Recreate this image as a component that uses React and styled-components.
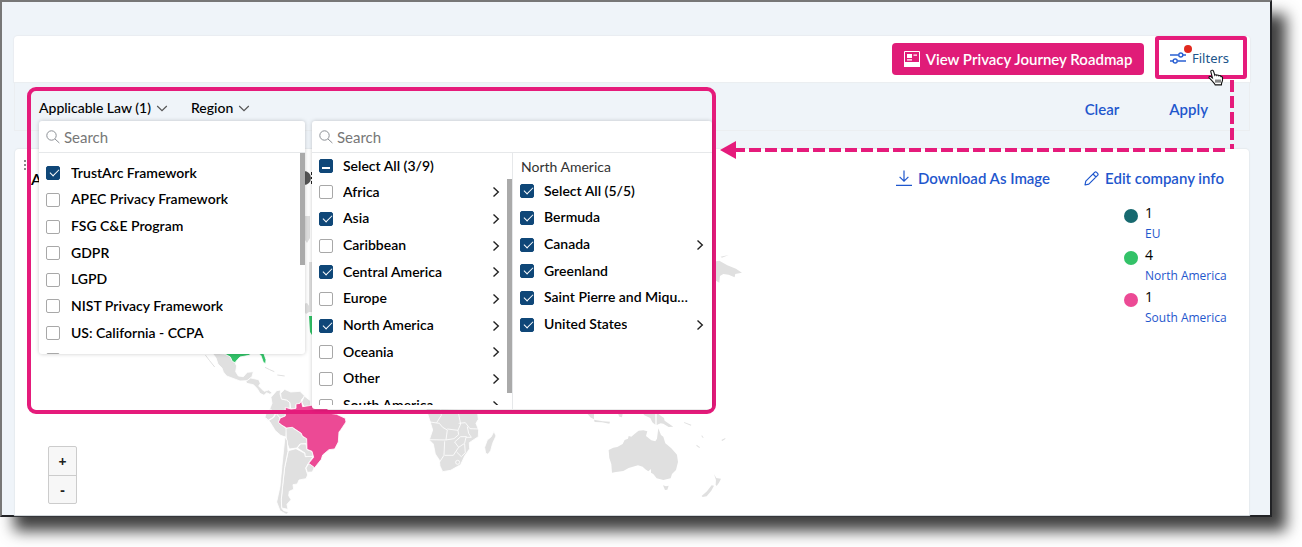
import { useState } from 'react';
import styled, { createGlobalStyle } from 'styled-components';

const GlobalStyle = createGlobalStyle`
  * {
    box-sizing: border-box;
  }

  body {
    margin: 0;
    background: #ffffff;
    font-family: Lato, "Liberation Sans", sans-serif;
    font-size: 14px;
    color: #000000;
  }

  button,
  input {
    font-family: inherit;
  }
`;

const Page = styled.div`
  min-height: 100vh;
  padding: 0 30px 30px 0;
  display: flex;
  overflow: hidden;
`;

const Window = styled.main`
  flex: 1;
  min-width: 0;
  display: flex;
  flex-direction: column;
  padding: 34px 20px 0 12px;
  background: #eff4f9;
  border: 2px solid;
  border-color: #777777 #222326 #222326 #777777;
  box-shadow: 14px 14px 14px rgba(0, 0, 0, 0.75);
`;

const Toolbar = styled.header`
  display: flex;
  justify-content: flex-end;
  align-items: flex-start;
  gap: 11px;
  height: 46px;
  padding-right: 3px;
  background: #ffffff;
  border-radius: 4px 4px 0 0;
  box-shadow: 0 0 1px 1px #e9edf1;
`;

const RoadmapButton = styled.button`
  display: flex;
  align-items: center;
  justify-content: center;
  gap: 6px;
  width: 252px;
  height: 32px;
  margin-top: 7px;
  padding: 0;
  border: 0;
  border-radius: 4px;
  background: #e01c78;
  color: #ffffff;
  font-size: 15px;
  font-weight: 600;
`;

const FilterToggleBox = styled.div`
  position: relative;
  display: flex;
  width: 92px;
  height: 43px;
  border: 4px solid #e51b7b;
  border-radius: 3px;
`;

const FilterToggle = styled.button`
  display: flex;
  align-items: center;
  flex: 1;
  gap: 6px;
  padding: 0 0 0 11px;
  border: 0;
  background: #ffffff;
  color: #20558a;
  font-family: "Noto Sans", sans-serif;
  font-size: 13px;
`;

const AlertDot = styled.span`
  position: absolute;
  top: 5px;
  left: 25px;
  width: 8px;
  height: 8px;
  border-radius: 50%;
  background: #e1291f;
`;

const Cursor = styled.svg`
  position: absolute;
  top: 29px;
  left: 49px;
  z-index: 4;
`;

const FilterBar = styled.section`
  position: relative;
  z-index: 2;
  display: flex;
  align-items: center;
  justify-content: flex-end;
  gap: 50px;
  height: 49px;
  padding: 5px 41px 0 0;
  border: 1px solid #ebeef1;
`;

const LinkButton = styled.button`
  display: flex;
  align-items: center;
  gap: 6px;
  padding: 0;
  border: 0;
  background: none;
  color: #1f57cd;
  font-size: 15px;
  font-weight: 600;
  line-height: 18px;
  white-space: nowrap;
`;

const Highlight = styled.div`
  position: absolute;
  top: 4px;
  left: 12px;
  width: 689px;
  height: 327px;
  border: 4px solid #e51b7b;
  border-radius: 9px;
`;

const FilterTabs = styled.div`
  display: flex;
  gap: 23px;
  height: 30px;
  padding: 3px 0 0 8px;
`;

const FilterTab = styled.button`
  display: flex;
  align-items: center;
  gap: 5px;
  padding: 0;
  border: 0;
  background: none;
  color: #000000;
  font-size: 14px;
  font-weight: 500;
`;

const Panels = styled.div`
  display: flex;
  align-items: flex-start;
  gap: 7px;
  padding-left: 8px;
`;

const Panel = styled.div`
  flex: ${props => props.$grow ? 1 : '0 0 266px'};
  min-width: 0;
  height: ${props => props.$height};
  overflow: hidden;
  background: #ffffff;
  border-radius: 3px;
  box-shadow: 0 0 4px rgba(0, 0, 0, 0.2);
`;

const SearchBox = styled.label`
  display: flex;
  align-items: center;
  gap: 4px;
  height: 32px;
  padding: 0 7px;
  border-bottom: 1px solid #e6e8ea;
  color: #8b8f94;
`;

const SearchInput = styled.input`
  flex: 1;
  min-width: 0;
  padding: 0;
  border: 0;
  outline: 0;
  background: transparent;
  font-size: 15px;

  &::placeholder {
    color: #777777;
  }
`;

const LawBody = styled.div`
  position: relative;
  height: 201px;
  padding-top: 7px;
  overflow: hidden;
`;

const OptionList = styled.ul`
  display: grid;
  grid-auto-rows: 1fr;
  height: ${props => props.$height};
  margin: 0;
  padding: 0;
  list-style: none;
`;

const OptionRow = styled.li`
  display: flex;
  align-items: center;
  min-width: 0;
  padding: 0 ${props => props.$end || '12px'} 0 7px;
`;

const OptionLabel = styled.label`
  display: flex;
  align-items: center;
  flex: 1;
  min-width: 0;
  gap: ${props => props.$gap || '10px'};
  font-size: 14px;
  font-weight: 600;
`;

const OptionText = styled.span`
  padding-bottom: 2px;
  overflow: hidden;
  text-overflow: ellipsis;
  white-space: nowrap;
`;

const Checkbox = styled.input`
  appearance: none;
  position: relative;
  flex: none;
  width: 14px;
  height: 14px;
  margin: 0;
  border: 1px solid #a8a8a8;
  border-radius: 2px;
  background: #ffffff;

  &:checked {
    border-color: #0f4778;
    background: #0f4778;
  }

  &:checked::after {
    content: '';
    position: absolute;
    top: ${props => props.$mixed ? '5px' : '2px'};
    left: ${props => props.$mixed ? '2px' : '3px'};
    width: 8px;
    height: ${props => props.$mixed ? '2px' : '4px'};
    border: 0 solid #ffffff;
    border-width: ${props => props.$mixed ? '0 0 2px 0' : '0 0 1px 1px'};
    transform: ${props => props.$mixed ? 'none' : 'rotate(-45deg)'};
  }
`;

const ScrollThumb = styled.span`
  position: absolute;
  top: 0;
  right: 0;
  width: 5px;
  height: ${props => props.$height};
  background: #aaaaaa;
`;

const RegionColumns = styled.div`
  display: grid;
  grid-template-columns: 201px 1fr;
  height: 256px;
`;

const RegionColumn = styled.div`
  min-width: 0;
  border-right: ${props => props.$divided ? '1px solid #e6e8ea' : '0'};
`;

const ColumnHead = styled.div`
  display: flex;
  height: 26px;
`;

const ColumnTitle = styled.h3`
  margin: 0;
  padding: 2px 0 0 8px;
  color: #333333;
  font-size: 14px;
  font-weight: 400;
  line-height: 23px;
`;

const RegionScroll = styled.div`
  position: relative;
  height: 226px;
  overflow: hidden;
`;

const Connector = styled.svg`
  position: absolute;
  top: -4px;
  right: 14px;
  z-index: 3;
`;

const Card = styled.section`
  position: relative;
  flex: 1;
  margin: 18px 1px 0;
  overflow: hidden;
  background: #ffffff;
  border-radius: 4px 4px 0 0;
  box-shadow: 0 0 1px 1px #e6ebef;
`;

const CardHeader = styled.div`
  display: flex;
  align-items: center;
  height: 54px;
  padding: 4px 25px 0 8px;
`;

const Grip = styled.svg`
  align-self: flex-start;
  margin-top: 7px;
`;

const CardTitle = styled.h2`
  flex: 0 0 267px;
  margin: 0;
  padding-left: 4px;
  font-size: 16px;
  font-weight: 600;
`;

const CardActions = styled.div`
  display: flex;
  gap: 34px;
  margin-left: auto;
`;

const CardBody = styled.div`
  display: flex;
  justify-content: space-between;
  padding-right: 23px;
`;

const Legend = styled.ul`
  width: 102px;
  margin: 0;
  padding: 0;
  list-style: none;
`;

const LegendItem = styled.li`
  display: grid;
  grid-template-columns: 14px 1fr;
  column-gap: 7px;
  height: 42px;
  font-family: "Open Sans", sans-serif;
`;

const LegendDot = styled.span`
  width: 14px;
  height: 14px;
  margin-top: 6px;
  border-radius: 50%;
  background: ${props => props.$color};
`;

const LegendCount = styled.div`
  font-size: 14px;
  line-height: 20px;
`;

const LegendLink = styled.a`
  display: block;
  color: #1f57cd;
  font-size: 12px;
  line-height: 22px;
  text-decoration: none;
  white-space: nowrap;
`;

const ZoomControls = styled.div`
  position: absolute;
  bottom: 11px;
  left: 33px;
  display: flex;
  flex-direction: column;
  width: 29px;
  border: 1px solid #cccccc;
  border-radius: 2px;
  background: #f7f7f7;
`;

const ZoomButton = styled.button`
  height: 28px;
  padding: 0;
  border: 0;
  background: none;
  color: #222222;
  font-family: "Open Sans", sans-serif;
  font-size: 14px;
  font-weight: 700;

  & + & {
    border-top: 1px solid #cccccc;
  }
`;

const LAWS = [
  'TrustArc Framework',
  'APEC Privacy Framework',
  'FSG C&E Program',
  'GDPR',
  'LGPD',
  'NIST Privacy Framework',
  'US: California - CCPA',
  'Framework Enterprise',
];

const REGIONS = [
  'Africa',
  'Asia',
  'Caribbean',
  'Central America',
  'Europe',
  'North America',
  'Oceania',
  'Other',
  'South America',
];

const COUNTRIES = [
  { name: 'Select All (5/5)' },
  { name: 'Bermuda' },
  { name: 'Canada', nested: true },
  { name: 'Greenland' },
  { name: 'Saint Pierre and Miquelon' },
  { name: 'United States', nested: true },
];

const LEGEND = [
  { count: 1, name: 'EU', color: '#17696f' },
  { count: 4, name: 'North America', color: '#33c268' },
  { count: 1, name: 'South America', color: '#ec4a95' },
];

const SearchIcon = () => (
  <svg width="14" height="14" viewBox="0 0 14 14" fill="none" stroke="currentColor">
    <circle cx="5.5" cy="5.5" r="4.7" />
    <path d="M9 9l4.4 4" />
  </svg>
);

const ChevronDown = () => (
  <svg width="12" height="12" viewBox="0 0 12 12" fill="none" stroke="#555555" strokeWidth="1.2">
    <path d="M1.2 4l4.8 4.6L10.8 4" />
  </svg>
);

const ChevronRight = () => (
  <svg width="8" height="12" viewBox="0 0 8 12" fill="none" stroke="#222222" strokeWidth="1.4">
    <path d="M1.5 1.4L6.3 6l-4.8 4.6" />
  </svg>
);

const RoadmapIcon = () => (
  <svg width="16" height="16" viewBox="0 0 16 16">
    <path d="M.5.5h15v15H.5z" fill="none" stroke="#ffffff" />
    <path d="M0 11h16v5H0zM3 3h5v4H3zM9.5 3.5H13v1.300H9.5zM3 8.200h5v1.300H3z" fill="#ffffff" />
  </svg>
);

const SlidersIcon = () => (
  <svg width="16" height="14" viewBox="0 0 16 14" fill="none" stroke="#2a60d2" strokeWidth="1.4">
    <path d="M0 4h8.5M13 4h3M0 10h3M7.5 10H16" />
    <circle cx="10.8" cy="4" r="2" />
    <circle cx="5.2" cy="10" r="2" />
  </svg>
);

const DownloadIcon = () => (
  <svg width="16" height="16" viewBox="0 0 16 16" fill="none" stroke="currentColor" strokeWidth="1.2">
    <path d="M8 .5v10.5M3.6 6.8L8 11.2l4.4-4.4M0 15.3h16" />
  </svg>
);

const PencilIcon = () => (
  <svg width="15" height="15" viewBox="0 0 15 15" fill="none" stroke="currentColor" strokeWidth="1.2" strokeLinejoin="round">
    <path d="M1 14l.8-3.8L10.6 1.4q1-.9 2 0l1 1q.9 1 0 2L4.8 13.2zM9 3l3 3" />
  </svg>
);

const HandCursor = () => (
  <Cursor width="16" height="17" viewBox="0 0 16 17">
    <path
      d="M3.5 1.4c.8-.5 1.7 0 2 .8l1.3 4c.5-.7 1.7-.6 2 .2.6-.7 1.8-.5 2.1.4.7-.5 1.9-.2 2.1.8.7-.2 1.4.2 1.5 1v2.6c0 1-.5 1.8-.9 2.8l-.2 1.9H7.2c-.5-1.7-2.2-3-3.8-4.7L1.2 8.9c-.7-.9.5-1.9 1.5-1.3l1.7 1.3L2.8 2.7c-.1-.5.2-1.1.7-1.3z"
      fill="#ffffff"
      stroke="#111111"
      strokeWidth="1.1"
    />
    <path d="M8 10.5v3.2M10 10.5v3.2M12 10.5v3.2" stroke="#111111" />
  </Cursor>
);

const WorldMap = () => (
  <svg width="760" height="311" viewBox="15 203 760 311" fill="#e0e0e0" stroke="#ffffff" strokeWidth="2.5" strokeLinejoin="round">
    {/* Strips of North America that stay visible between the menus */}
    <g stroke="none">
      <path d="M303 216h7v22l-3 5-4-6zM309 262h4v50h-4zM300 305l7-2 5 7-6 4z" />
      <path d="M309 316h5v22l-4-6z" fill="#33c268" />
    </g>

    {/* Americas and Africa */}
    <g transform="translate(190 340) scale(.3333)">
      <path d="M66 38L104 42 122 50 134 66 140 78 137 95 145 108 160 110 172 97 190 95 186 110 172 122 150 123 110 108 100 96 96 84 84 72 78 54z" />
      <path d="M168 124L182 114 206 119 211 130 206 138 222 154 236 150 246 158 240 163 230 158 222 166 210 160 202 146 190 134 170 130z" />
      <path d="M225 82l14 7 14 6M262 105l22 3M46 45l12 16 16 20" fill="none" stroke="#e0e0e0" strokeWidth="3" />
      <path d="M98 38h86l-6 8-28 5-8 8-7 9-8-4-6-13zM204 38l17 1 7 20-1 12-7-4-7-20z" fill="#33c268" />
      <path d="M246 190L243 172 260 152 272 150 270 162 276 178 290 180 300 188 300 205 286 204 286 228 270 234 258 220 238 210z" />
      <path d="M272 160L284 148 302 156 330 154 344 168 334 180 336 187 318 194 318 205 302 207 300 188 290 180 274 177z" />
      <path d="M343 168l18 14v18l-18 2-8-16z" />
      <path d="M229 216L240 207 257 218 250 232 232 242 225 232z" />
      <path d="M227 234L236 242 252 232 258 220 270 234 266 248 284 262 290 266 288 292 272 286 256 272 240 246z" />
      <path d="M288 265L305 258 312 266 334 280 338 290 350 295 352 311 330 312 321 324 298 327 289 304z" />
      <path d="M322 324L332 312 348 312 351 329 366 334 370 348 360 353 344 349 345 339z" />
      <path d="M295 332L318 326 344 340 346 350 370 349 355 370 347 384 353 405 348 416 327 420 322 432 309 434 311 448 298 454 296 467 303 479 291 493 294 508 275 504 274 478 278 436 284 382z" />
      <path d="M285 290L292 302 294 334 284 382 278 436 274 478 275 504 281 512 296 516 289 523 270 512 260 486 270 440 276 376z" />
      <path d="M348 384L357 370 373 382 367 396 352 397z" />
      <path d="M286 202L303 207 318 205 318 192 330 190 334 182 338 200 364 196 372 202 412 205 420 220 440 223 466 235 468 246 452 270 447 276 445 306 434 327 417 329 398 345 394 358 374 383 356 370 371 352 366 334 351 328 350 296 337 288 334 280 307 262 290 264 276 256 265 247 271 234 286 228z" fill="#ec4a95" />
      <path d="M560 198h60l24 10-12 4-18-5-18 1z" />
      <path d="M708 206L862 210 865 238 858 250 866 270 865 290 838 308 839 326 824 348 812 374 782 391 758 395 750 378 748 360 736 342 730 312 718 300 728 270 719 240z" />
      <path d="M720 246L748 250 758 262 772 270 768 300 718 299M752 205L754 226 740 248M772 267L804 271 812 252 806 222 815 205M804 271L806 284 792 296 768 300M806 250L826 248 840 266 866 267M832 260L836 280 844 292 828 292 824 310 806 322 794 306 812 290 830 290M764 304L762 346 749 366 734 350M764 346L790 346 806 322M824 312L826 338 814 350 800 336" fill="none" />
      <circle cx="803" cy="367" r="6" />
      <path d="M912 274L918 288 908 310 902 332 894 343 887 340 884 322 892 300 904 290z" />
    </g>

    {/* Australia and Oceania */}
    <g transform="translate(480 390) scale(.3333)" stroke="none">
      <path d="M386 180L400 173 412 171 428 162 434 150 444 146 446 138 454 140 470 127 476 122 490 121 502 124 498 138 514 151 526 154 531 146 535 115 543 135 550 140 556 160 574 175 591 194 594 216 588 240 576 252 572 265 550 270 530 265 520 252 513 248 513 237 505 244 496 238 488 230 474 226 446 234 430 243 408 246 396 248 394 222 388 204z" />
      <path d="M549 286l9 3 8-2-4 12-7 1zM702 252l7 12 14 2-6 12-7 10-3-4 1-14zM665 318l16-14 14-18 7 1-8 15-14 17-12 2z" />
      <path d="M486 66h40v38l-9-7-6-13-18-8zM530 66l10 10 12 8 2 8 26 18-14 1-16-10-8-1-12 5zM318 66h24v22l-11-6zM342 89l26 5 22 1-2 6-22-4-22-1zM412 66l16 6-2 10-8-2z" />
      <path d="M612 96l22 8-1 3-20-8zM666 136l5 7-2 1-5-6zM650 164l10 8-2 2-9-7zM724 150l12-6v3l-9 6z" />
    </g>

    {/* Far east coast */}
    <g transform="translate(300 240) scale(.3333)" stroke="none">
      <path d="M1236 66l22-4 24 14 26 10 18 12-20 4-2 10-18-8-16-2-10 6-2 20-10-6-12-10zM1262 50l24-5-20 8z" />
    </g>
  </svg>
);

const App = () => {
  const [laws, setLaws] = useState(['TrustArc Framework']);
  const [regions, setRegions] = useState(['Asia', 'Central America', 'North America']);
  const [countries, setCountries] = useState(COUNTRIES.map(country => country.name));

  const toggle = (setter, name) => {
    setter(prev => prev.includes(name) ? prev.filter(item => item !== name) : [...prev, name]);
  };

  return (
    <Page>
      <GlobalStyle />
      <Window>
        <Toolbar>
          <RoadmapButton type="button">
            <RoadmapIcon />
            View Privacy Journey Roadmap
          </RoadmapButton>
          <FilterToggleBox>
            <FilterToggle type="button">
              <SlidersIcon />
              Filters
            </FilterToggle>
            <AlertDot />
            <HandCursor />
          </FilterToggleBox>
        </Toolbar>

        <FilterBar>
          <LinkButton type="button">Clear</LinkButton>
          <LinkButton type="button">Apply</LinkButton>

          <Highlight>
            <FilterTabs>
              <FilterTab type="button">
                Applicable Law (1)
                <ChevronDown />
              </FilterTab>
              <FilterTab type="button">
                Region
                <ChevronDown />
              </FilterTab>
            </FilterTabs>

            <Panels>
              <Panel $height="233px">
                <SearchBox>
                  <SearchIcon />
                  <SearchInput type="text" placeholder="Search" aria-label="Search laws" />
                </SearchBox>
                <LawBody>
                  <OptionList $height="213px">
                    {LAWS.map(law => (
                      <OptionRow key={law}>
                        <OptionLabel $gap="11px">
                          <Checkbox
                            type="checkbox"
                            checked={laws.includes(law)}
                            onChange={() => toggle(setLaws, law)}
                          />
                          <OptionText>{law}</OptionText>
                        </OptionLabel>
                      </OptionRow>
                    ))}
                  </OptionList>
                  <ScrollThumb $height="112px" />
                </LawBody>
              </Panel>

              <Panel $grow $height="288px">
                <SearchBox>
                  <SearchIcon />
                  <SearchInput type="text" placeholder="Search" aria-label="Search regions" />
                </SearchBox>
                <RegionColumns>
                  <RegionColumn $divided>
                    <ColumnHead>
                      <OptionRow as="div">
                        <OptionLabel>
                          <Checkbox type="checkbox" $mixed checked readOnly />
                          <OptionText>Select All (3/9)</OptionText>
                        </OptionLabel>
                      </OptionRow>
                    </ColumnHead>
                    <RegionScroll>
                      <OptionList $height="240px">
                        {REGIONS.map(region => (
                          <OptionRow key={region}>
                            <OptionLabel>
                              <Checkbox
                                type="checkbox"
                                checked={regions.includes(region)}
                                onChange={() => toggle(setRegions, region)}
                              />
                              <OptionText>{region}</OptionText>
                            </OptionLabel>
                            <ChevronRight />
                          </OptionRow>
                        ))}
                      </OptionList>
                      <ScrollThumb $height="214px" />
                    </RegionScroll>
                  </RegionColumn>

                  <RegionColumn>
                    <ColumnTitle>North America</ColumnTitle>
                    <OptionList $height="160px">
                      {COUNTRIES.map(({ name, nested }) => (
                        <OptionRow key={name} $end={nested ? '8px' : '19px'}>
                          <OptionLabel>
                            <Checkbox
                              type="checkbox"
                              checked={countries.includes(name)}
                              onChange={() => toggle(setCountries, name)}
                            />
                            <OptionText>{name}</OptionText>
                          </OptionLabel>
                          {nested && <ChevronRight />}
                        </OptionRow>
                      ))}
                    </OptionList>
                  </RegionColumn>
                </RegionColumns>
              </Panel>
            </Panels>
          </Highlight>

          <Connector width="515" height="82" viewBox="0 0 515 82" fill="none" stroke="#e51b7b" strokeWidth="4">
            <path d="M512 1v69" strokeDasharray="12 4" />
            <path d="M505 71H15" strokeDasharray="12 4" />
            <path d="M0 71l16-9v18z" fill="#e51b7b" stroke="none" />
          </Connector>
        </FilterBar>

        <Card>
          <CardHeader>
            <Grip width="4" height="12" viewBox="0 0 4 12" fill="#888888">
              <path d="M1 0h2v2H1zM1 4h2v2H1zM1 8h2v2H1z" />
            </Grip>
            <CardTitle>A</CardTitle>
            <svg width="20" height="14" viewBox="0 0 20 14" fill="#555555">
              <circle cx="10" cy="7" r="7" />
              <path d="M17 1h3v3h-3zM17 6h3v2h-3zM17 10h3v3h-3z" fill="#222222" />
            </svg>
            <CardActions>
              <LinkButton type="button">
                <DownloadIcon />
                Download As Image
              </LinkButton>
              <LinkButton type="button">
                <PencilIcon />
                Edit company info
              </LinkButton>
            </CardActions>
          </CardHeader>

          <CardBody>
            <WorldMap />
            <Legend>
              {LEGEND.map(({ count, name, color }) => (
                <LegendItem key={name}>
                  <LegendDot $color={color} />
                  <div>
                    <LegendCount>{count}</LegendCount>
                    <LegendLink href="#map">{name}</LegendLink>
                  </div>
                </LegendItem>
              ))}
            </Legend>
          </CardBody>

          <ZoomControls>
            <ZoomButton type="button" aria-label="Zoom in">+</ZoomButton>
            <ZoomButton type="button" aria-label="Zoom out">-</ZoomButton>
          </ZoomControls>
        </Card>
      </Window>
    </Page>
  );
};

export default App;
